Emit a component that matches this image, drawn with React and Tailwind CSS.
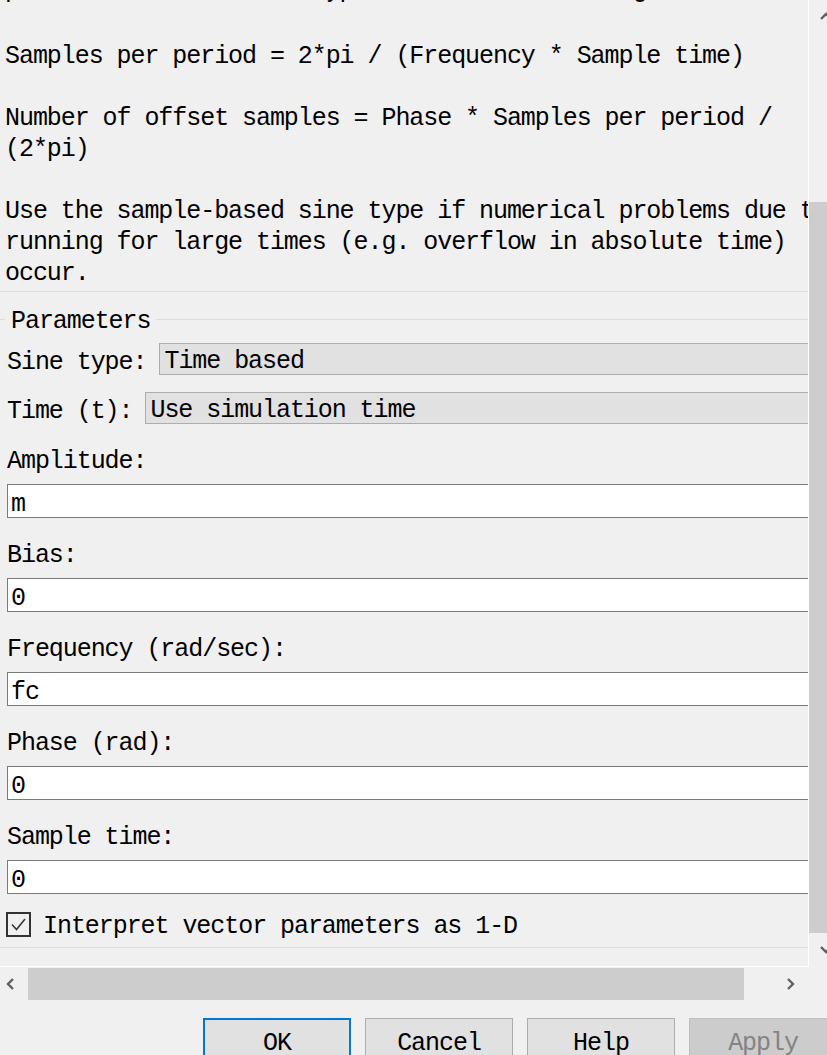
const mono = { fontFamily: '"Liberation Mono", "DejaVu Sans Mono", monospace' };

const descLines = [
  'parameters in the two types are related through:',
  '',
  'Samples per period = 2*pi / (Frequency * Sample time)',
  '',
  'Number of offset samples = Phase * Samples per period /',
  '(2*pi)',
  '',
  'Use the sample-based sine type if numerical problems due to',
  'running for large times (e.g. overflow in absolute time)',
  'occur.',
];

const fields = [
  { label: 'Amplitude:', value: 'm' },
  { label: 'Bias:', value: '0' },
  { label: 'Frequency (rad/sec):', value: 'fc' },
  { label: 'Phase (rad):', value: '0' },
  { label: 'Sample time:', value: '0' },
];

const Chevron = ({ dir }) => {
  const paths = {
    up: 'M2 9 L7 4 L12 9',
    down: 'M2 4 L7 9 L12 4',
    left: 'M9 2 L4 7 L9 12',
    right: 'M5 2 L10 7 L5 12',
  };
  return (
    <svg width="14" height="14" viewBox="0 0 14 14" className="shrink-0">
      <path d={paths[dir]} fill="none" stroke="#606060" strokeWidth="2.4" />
    </svg>
  );
};

const Dropdown = ({ label, value }) => (
  <div className="flex items-center h-[32px] pl-[7px] whitespace-pre">
    <span className="mr-[13px] pt-[8px]">{label}</span>
    <div className="w-[700px] shrink-0 h-[32px] bg-[#e1e1e1] border border-[#adadad] flex items-center pl-[4px]">
      <span className="pt-[6px]">{value}</span>
    </div>
  </div>
);

const Field = ({ label, value }) => (
  <div className="flex flex-col">
    <div className="mt-[19px] h-[32px] flex items-center pl-[7px] whitespace-pre">
      <span className="pt-[6px]">{label}</span>
    </div>
    <div className="mt-[9px] ml-[7px] w-[820px] shrink-0 h-[34px] bg-white border border-[#7a7a7a] flex items-center pl-[3px]">
      <span className="pt-[8px]">{value}</span>
    </div>
  </div>
);

const Button = ({ children, primary, disabled }) => (
  <div
    className={
      'w-[148px] h-[48px] shrink-0 flex items-center justify-center pt-[4px] ' +
      (primary
        ? 'border-2 border-[#0078d7] bg-[#e1e1e1] text-black'
        : disabled
        ? 'border border-[#bfbfbf] bg-[#cccccc] text-[#838383]'
        : 'border border-[#adadad] bg-[#e1e1e1] text-black')
    }
  >
    {children}
  </div>
);

export default function App() {
  return (
    <div
      className="w-[827px] h-[1055px] overflow-hidden bg-[#f0f0f0] text-black text-[25px] tracking-[-1.06px] flex flex-col"
      style={mono}
    >
      <div className="flex h-[967px] shrink-0">
        {/* scrolled content pane */}
        <div className="w-[809px] shrink-0 h-[967px] border-r border-b border-white overflow-hidden flex flex-col">
          <div className="mt-[-21px] leading-[31px] whitespace-pre">
            {descLines.map((l, i) => (
              <div key={i} className={'h-[31px] pl-[5px] ' + (i === 0 ? 'leading-[23px]' : '')}>
                {l}
              </div>
            ))}
          </div>
          <div className="mt-[2px] h-px bg-[#dcdcdc] w-[808px] shrink-0" />

          <div className="mt-[13px] h-[31px] flex items-center">
            <div className="w-[5px] h-px bg-[#dcdcdc] -mt-[3px]" />
            <span className="px-[6px] pt-[2px]">Parameters</span>
            <div className="flex-1 h-px bg-[#dcdcdc] -mt-[3px]" />
          </div>

          <div className="mt-[7px]">
            <Dropdown label="Sine type:" value="Time based" />
          </div>
          <div className="mt-[17px]">
            <Dropdown label="Time (t):" value="Use simulation time" />
          </div>

          {fields.map((f) => (
            <Field key={f.label} label={f.label} value={f.value} />
          ))}

          <div className="mt-[18px] h-[24px] flex items-center pl-[6px]">
            <div className="w-[25px] h-[25px] border-2 border-[#333333] flex items-center justify-center shrink-0">
              <svg width="19" height="19" viewBox="0 0 19 19">
                <path d="M3 9.5 L7.5 14.5 L16 4" fill="none" stroke="#333333" strokeWidth="1.5" />
              </svg>
            </div>
            <span className="ml-[12px] pt-[5px] whitespace-pre">Interpret vector parameters as 1-D</span>
          </div>
          <div className="mt-[11px] h-px bg-[#dcdcdc] w-[808px] shrink-0" />
        </div>

        {/* vertical scrollbar (clipped by window edge) */}
        <div className="w-[34px] shrink-0 flex flex-col items-center">
          <div className="h-[34px] flex items-center justify-center">
            <Chevron dir="up" />
          </div>
          <div className="h-[168px]" />
          <div className="w-[34px] h-[731px] bg-[#cdcdcd]" />
          <div className="h-[34px] flex items-center justify-center">
            <Chevron dir="down" />
          </div>
        </div>
      </div>

      {/* horizontal scrollbar */}
      <div className="h-[33px] w-[808px] shrink-0 flex items-center">
        <div className="w-[28px] h-full flex items-center justify-start pl-[4px]">
          <Chevron dir="left" />
        </div>
        <div className="w-[716px] h-[32px] mt-[1px] bg-[#cdcdcd]" />
        <div className="flex-1 h-full flex items-center justify-end pr-[11px]">
          <Chevron dir="right" />
        </div>
      </div>

      {/* buttons */}
      <div className="mt-[18px] flex gap-[14px] pl-[203px]">
        <Button primary>OK</Button>
        <Button>Cancel</Button>
        <Button>Help</Button>
        <Button disabled>Apply</Button>
      </div>
    </div>
  );
}
